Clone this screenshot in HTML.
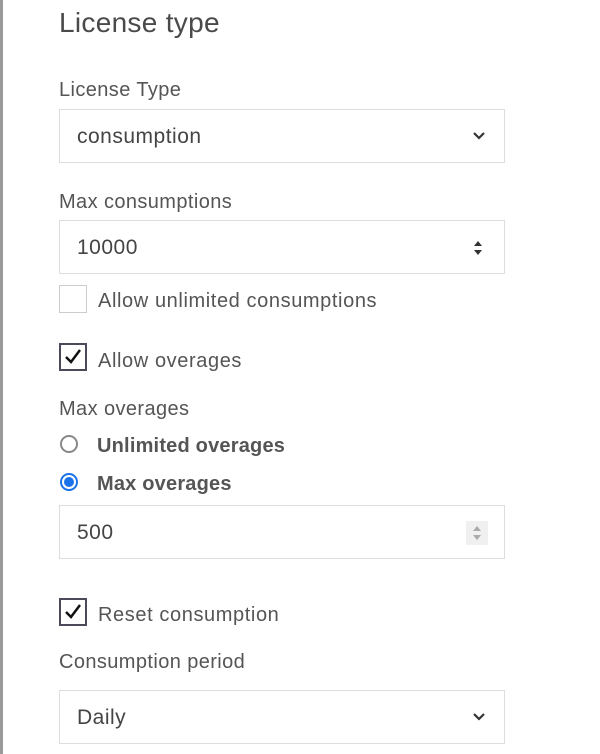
<!DOCTYPE html>
<html><head><style>
body{margin:0;width:600px;height:754px;background:#fff;font-family:"Liberation Sans",sans-serif;color:#555;position:relative;overflow:hidden}
.bar{position:absolute;left:0;top:0;width:3px;height:754px;background:#9a9a9a}
.a{position:absolute}
.t{left:59px;top:7px;font-size:28px;color:#4a4a4a;letter-spacing:0.3px}
.l{left:59px;font-size:20px;color:#555;letter-spacing:0.4px}
.box{left:59px;width:446px;height:54px;border:1px solid #ddd;box-sizing:border-box}
.box span{position:absolute;left:17px;top:15px;font-size:21px;color:#444;letter-spacing:0.5px}
.chev{position:absolute;right:18px;top:21px}
.cb{left:59px;width:28px;height:28px;box-sizing:border-box;border:1px solid #ccc}
.cb.on{border:2px solid #4a4a5a}
.cl{left:98px;font-size:20px;letter-spacing:0.6px}
.rad{left:60px;width:18px;height:18px;border-radius:50%;box-sizing:border-box;border:2px solid #888}
.rad.on{border:2px solid #1a73e8}
.rad.on::after{content:"";position:absolute;left:2px;top:2px;width:10px;height:10px;border-radius:50%;background:#1a73e8}
.spin{position:absolute;right:16px;top:15px;width:22px;height:24px;background:#f0f0f0}
.rl{left:97px;font-size:20px;font-weight:bold;color:#555;letter-spacing:0.2px}
</style></head><body>
<div class="bar"></div>
<div class="a t">License type</div>
<div class="a l" style="top:79px">License Type</div>
<div class="a box" style="top:109px"><span>consumption</span><svg class="chev" width="14" height="10" viewBox="0 0 14 10"><path d="M2 2l5 5 5-5" stroke="#333" stroke-width="2.2" fill="none"/></svg></div>
<div class="a l" style="top:191px">Max consumptions</div>
<div class="a box" style="top:220px"><span>10000</span><svg class="chev" style="top:17px;right:20px" width="12" height="20" viewBox="0 0 12 20"><path d="M2 8l4-5 4 5z M2 12l4 5 4-5z" fill="#333"/></svg></div>
<div class="a cb" style="top:285px"></div>
<div class="a cl" style="top:290px">Allow unlimited consumptions</div>
<div class="a cb on" style="top:343px"><svg width="24" height="24" viewBox="0 0 24 24"><path d="M5 12l5 5 9-12" stroke="#111" stroke-width="2.5" fill="none"/></svg></div>
<div class="a cl" style="top:350px">Allow overages</div>
<div class="a l" style="top:398px">Max overages</div>
<div class="a rad" style="top:435px"></div>
<div class="a rl" style="top:435px">Unlimited overages</div>
<div class="a rad on" style="top:473px"></div>
<div class="a rl" style="top:473px">Max overages</div>
<div class="a box" style="top:505px"><span>500</span><div class="spin"><svg style="position:absolute;left:5px;top:2px" width="12" height="20" viewBox="0 0 12 20"><path d="M2 8l4-5 4 5z M2 12l4 5 4-5z" fill="#aaa"/></svg></div></div>
<div class="a cb on" style="top:598px"><svg width="24" height="24" viewBox="0 0 24 24"><path d="M5 12l5 5 9-12" stroke="#111" stroke-width="2.5" fill="none"/></svg></div>
<div class="a cl" style="top:604px">Reset consumption</div>
<div class="a l" style="top:651px">Consumption period</div>
<div class="a box" style="top:690px"><span>Daily</span><svg class="chev" width="14" height="10" viewBox="0 0 14 10"><path d="M2 2l5 5 5-5" stroke="#333" stroke-width="2.2" fill="none"/></svg></div>
</body></html>
